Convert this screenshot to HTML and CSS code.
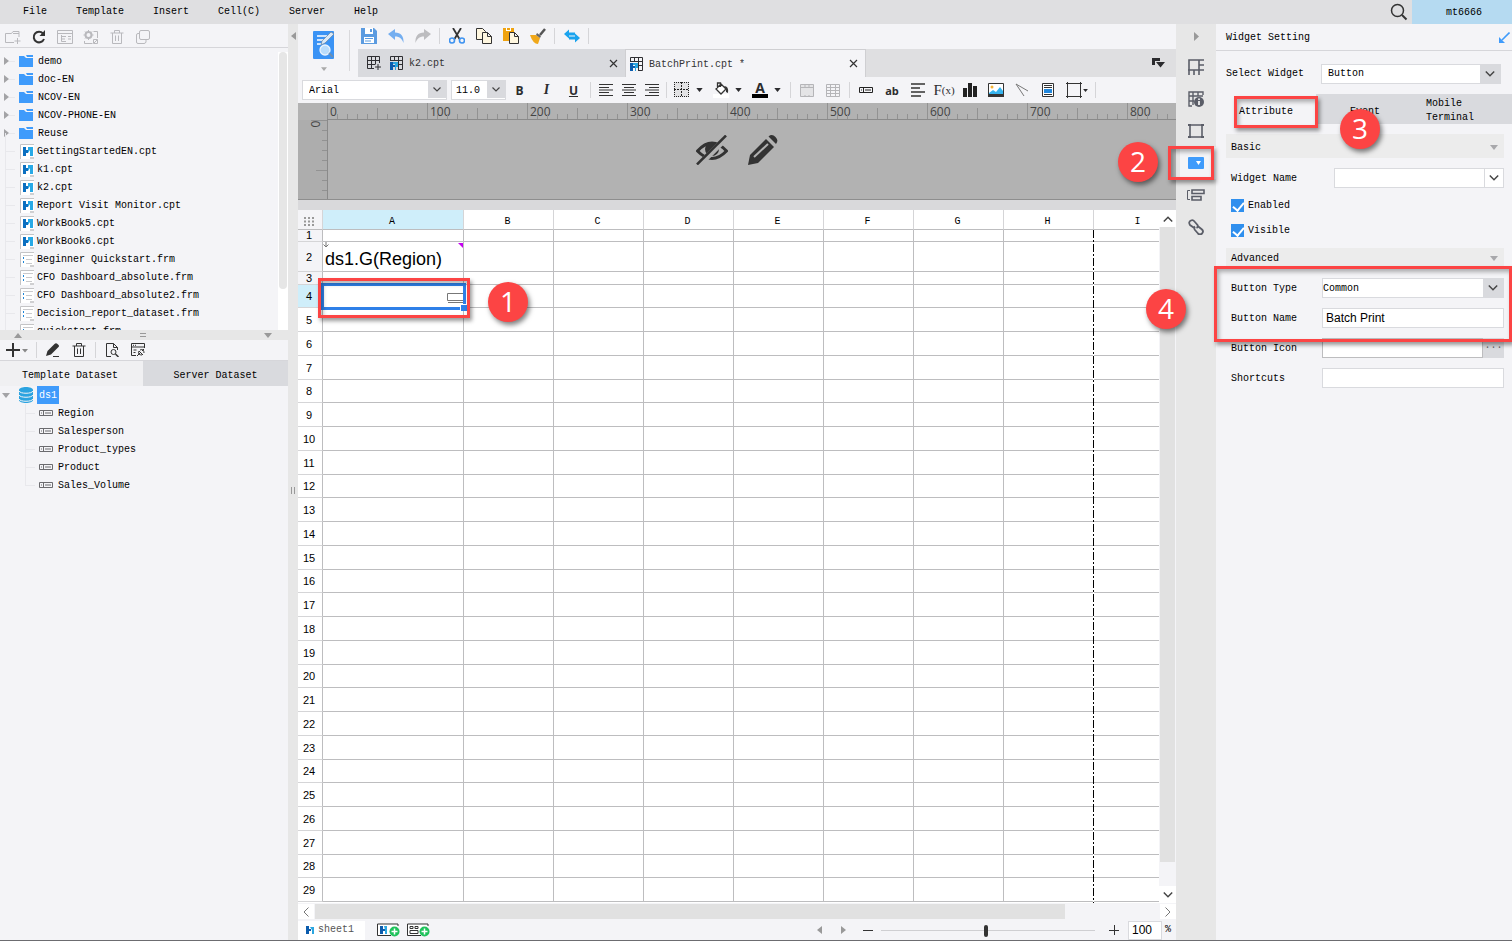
FILE: index.html
```
<!DOCTYPE html>
<html lang="en">
<head>
    <meta charset="UTF-8">
    <meta name="viewport" content="width=device-width, initial-scale=1.0">
    <title>Report Designer</title>
    <link rel="stylesheet" href="styles.css">
</head>
<body>
    <!-- Shared icons -->
    <svg class="sprite" aria-hidden="true">
        <symbol id="folder" viewBox="0 0 14 12"><path fill="#3f9bfb" d="M0 1h5l2 2h7v9H0z"/><path fill="#3f9bfb" d="M7 0h7v2H8z"/></symbol>
        <symbol id="cpt" viewBox="0 0 14 15"><path fill="#fff" d="M0 0h14v15H0z"/><path fill="none" stroke="#c4c4c6" d="M14 .5H.5V15"/><path fill="#cfcfd1" d="M10 13h4v2h-4z"/><path fill="#0b6fc0" d="M3 3h3v3h2v3H6v3H3z"/><path fill="#27a9e6" d="M8 3h5v9h-3V6L8 9z"/></symbol>
        <symbol id="frm" viewBox="0 0 14 15"><path fill="#fff" d="M0 0h14v15H0z"/><path fill="none" stroke="#c4c4c6" d="M14 .5H.5V15"/><path fill="#cfcfd1" d="M10 13h4v2h-4z"/><path fill="#1f86d8" d="M3 5h1v2H3zM3 9h1v2H3z"/><path fill="none" stroke="#c9c9cc" d="M3 3.500h10M6 7.500h6M6 11.500h6"/></symbol>
        <symbol id="field" viewBox="0 0 14 6"><path fill="none" stroke="#6b6b6f" d="M.5.5h13v5H.5zM4.500 1v4M6 3h6M2 3h1"/></symbol>
        <symbol id="down" viewBox="0 0 8 5"><path fill="none" stroke="#444" stroke-width="1.200" d="M.5.5L4 4 7.500.5"/></symbol>
        <symbol id="tri" viewBox="0 0 8 5"><path fill="currentColor" d="M0 0h8L4 5z"/></symbol>
        <symbol id="close" viewBox="0 0 9 9"><path fill="none" stroke="#333" stroke-width="1.200" d="M1 1l7 7M8 1L1 8"/></symbol>
        <symbol id="book" viewBox="0 0 14 14"><path fill="none" stroke="#2f2f33" d="M.5 5V.5h12v13H8M.5 4.500h12M4.500.5v4M8.500.5v13M8.500 8.500h4"/><path fill="#0b5cad" d="M0 6h3v3h2v2H3v3H0z"/><path fill="#2ba6e0" d="M3 6h5v5H6v3H5V8H3z"/></symbol>
        <symbol id="logo" viewBox="0 0 8 8"><path fill="#0b5cad" d="M0 0h3v3h2v2H3v3H0z"/><path fill="#2ba6e0" d="M4 1h4v7H6V4z"/></symbol>
    </svg>

    <header class="menubar">
        <nav class="menu">
            <button>File</button>
            <button>Template</button>
            <button>Insert</button>
            <button>Cell(C)</button>
            <button>Server</button>
            <button>Help</button>
        </nav>
        <button class="search" aria-label="Search">
            <svg width="18" height="18" viewBox="0 0 18 18"><circle cx="7.500" cy="7.500" r="6" fill="none" stroke="#333" stroke-width="1.500"/><path d="M12 12l4.500 4.500" stroke="#333" stroke-width="2"/></svg>
        </button>
        <button class="user">mt6666</button>
    </header>

    <main class="workspace">
        <!-- Left: files and datasets -->
        <aside class="left">
            <div class="tools file-tools">
                <button aria-label="New folder"><svg width="16" height="14" viewBox="0 0 16 14"><path fill="none" stroke="#b9b9bd" d="M9 12.500H.5V3.500h6L8 1.500h6V7M8 3.500h6M12.500 8v6M9.500 11h6"/></svg></button>
                <button aria-label="Refresh"><svg width="14" height="14" viewBox="0 0 14 14"><path fill="none" stroke="#333" stroke-width="2" d="M11 3.500A5.300 5.300 0 1 0 12 9"/><path fill="#333" d="M13 0v6H7.500z"/></svg></button>
                <button aria-label="Locate"><svg width="16" height="14" viewBox="0 0 16 14"><path fill="none" stroke="#b9b9bd" d="M.5.500h15v13H.5zM0 3.500h16M4.500 5v6.500H9M4 6.500h5M4 9h4M11 6.500h3M11 9h3"/></svg></button>
                <button aria-label="Settings"><svg width="16" height="14" viewBox="0 0 16 14"><circle cx="5.500" cy="5" r="3" fill="none" stroke="#b9b9bd" stroke-width="2"/><path stroke="#b9b9bd" fill="none" d="M5.500 0v2M5.500 8v2M.5 5h2M8.500 5h2M2 1.500l1 1M9 1.500l-1 1M2 8.500l1-1M10.500 1.500h4V8M1.500 11v2.500h8M10.500 9.500h4v4h-4zM11 13l3-3"/></svg></button>
                <button aria-label="Delete"><svg width="14" height="14" viewBox="0 0 14 14"><path fill="none" stroke="#b9b9bd" d="M.5 3h13M4.500 3V.5h5V3M2.500 3v10.500h9V3M5.500 5.500v5.500M8.500 5.500v5.500"/></svg></button>
                <button aria-label="Copy"><svg width="14" height="14" viewBox="0 0 14 14"><path fill="none" stroke="#b9b9bd" d="M5 .5h7q1.500 0 1.500 1.500v6q0 1.500-1.500 1.500H5Q3.500 9.500 3.500 8V2Q3.500.5 5 .5zM3 3.500H2Q.5 3.500.5 5v7q0 1.500 1.500 1.500h6q1.500 0 2-1.500v-2"/></svg></button>
            </div>
            <div class="files">
                <ul class="tree">
                    <li class="dir"><svg><use href="#folder"/></svg>demo</li>
                    <li class="dir"><svg><use href="#folder"/></svg>doc-EN</li>
                    <li class="dir"><svg><use href="#folder"/></svg>NCOV-EN</li>
                    <li class="dir"><svg><use href="#folder"/></svg>NCOV-PHONE-EN</li>
                    <li class="dir"><svg><use href="#folder"/></svg>Reuse</li>
                    <li><svg><use href="#cpt"/></svg>GettingStartedEN.cpt</li>
                    <li><svg><use href="#cpt"/></svg>k1.cpt</li>
                    <li><svg><use href="#cpt"/></svg>k2.cpt</li>
                    <li><svg><use href="#cpt"/></svg>Report Visit Monitor.cpt</li>
                    <li><svg><use href="#cpt"/></svg>WorkBook5.cpt</li>
                    <li><svg><use href="#cpt"/></svg>WorkBook6.cpt</li>
                    <li><svg><use href="#frm"/></svg>Beginner Quickstart.frm</li>
                    <li><svg><use href="#frm"/></svg>CFO Dashboard_absolute.frm</li>
                    <li><svg><use href="#frm"/></svg>CFO Dashboard_absolute2.frm</li>
                    <li><svg><use href="#frm"/></svg>Decision_report_dataset.frm</li>
                    <li><svg><use href="#frm"/></svg>quickstart.frm</li>
                </ul>
                <div class="file-scroll"><div class="file-thumb"></div></div>
            </div>
            <div class="hsplit">
                <svg class="flip" width="10" height="5"><use href="#tri"/></svg>
                <svg width="6" height="4"><path stroke="#999" d="M0 .5h6M0 3.500h6"/></svg>
                <svg width="10" height="5"><use href="#tri"/></svg>
            </div>
            <div class="tools data-tools">
                <button aria-label="Add dataset"><svg width="22" height="14" viewBox="0 0 22 14"><path stroke="#333" stroke-width="2" d="M0 7h14M7 0v14"/><path fill="#888" d="M16 6h6l-3 3.500z"/></svg></button>
                <i class="sep"></i>
                <button aria-label="Edit"><svg width="14" height="14" viewBox="0 0 14 14"><path fill="#333" d="M0 13l1.500-5 7-7q1.500-1.500 3 0l1 1q1 1 0 2l-7.500 7.500z"/><path stroke="#333" d="M7 13.500h6"/></svg></button>
                <button aria-label="Delete dataset"><svg width="14" height="14" viewBox="0 0 14 14"><path fill="none" stroke="#333" d="M.5 3h13M4.500 3V.5h5V3M2.500 3v10.500h9V3M5.500 5.500v5.500M8.500 5.500v5.500"/></svg></button>
                <i class="sep"></i>
                <button aria-label="Preview"><svg width="13" height="14" viewBox="0 0 13 14"><path fill="none" stroke="#333" d="M5 13.500H.5V.5h7l4 4V7M7.500.5v4h4"/><circle cx="7.500" cy="9" r="2.500" fill="none" stroke="#333"/><path stroke="#333" stroke-width="1.500" d="M9.500 11l3 3"/></svg></button>
                <button aria-label="Connection"><svg width="14" height="14" viewBox="0 0 14 14"><path fill="none" stroke="#333" d="M13.500 5V.5H.5v12H5M.5 4h13M2 2.300h1M4 2.300h1M2.500 7h3M2.500 9.500h2"/><path fill="none" stroke="#333" d="M6 13l3-3M8 8l4 4M9 7q2-1 3 0t1 3M8 8q-1 2 0 3t3 1M11 8l2-2"/></svg></button>
            </div>
            <div class="tabs2">
                <button class="on">Template Dataset</button>
                <button>Server Dataset</button>
            </div>
            <ul class="tree dataset">
                <li class="root"><svg viewBox="0 0 14 16"><path fill="#2ba3e0" d="M0 3v10c0 4 14 4 14 0V3c0-4-14-4-14 0z"/><path fill="none" stroke="#f4f4f7" d="M0 4c1 3 13 3 14 0M0 8c1 3 13 3 14 0M0 12c1 3 13 3 14 0"/></svg><span>ds1</span></li>
                <li><svg><use href="#field"/></svg>Region</li>
                <li><svg><use href="#field"/></svg>Salesperson</li>
                <li><svg><use href="#field"/></svg>Product_types</li>
                <li><svg><use href="#field"/></svg>Product</li>
                <li><svg><use href="#field"/></svg>Sales_Volume</li>
            </ul>
        </aside>

        <div class="vsplit">
            <svg width="5" height="8"><path fill="#999" d="M5 0v8L0 4z"/></svg>
            <svg class="grip" width="4" height="7"><path stroke="#999" d="M.5 0v7M3.500 0v7"/></svg>
        </div>

        <!-- Center: report editor -->
        <section class="editor">
            <div class="head">
                <button class="preview" aria-label="Preview report">
                    <svg width="22" height="29" viewBox="0 0 22 29"><rect width="21" height="28" rx="1" fill="#3a93f5"/><path stroke="#fff" stroke-width="1.500" d="M4 5h10M4 9h7M4 13h4"/><path fill="#dbe9f7" stroke="#6a7b8c" stroke-width=".6" d="M8 14l1-4 9-9 3 2-9 9z"/><circle cx="12" cy="19" r="5" fill="#b9dcfb" stroke="#e9f3fd" stroke-width="1.300"/><path stroke="#6a8fb4" stroke-width="2" d="M16 22l4 4"/></svg>
                    <svg width="6" height="4"><use href="#tri"/></svg>
                </button>
                <div class="head-main">
                    <div class="quick">
                        <button aria-label="Save"><svg width="16" height="16" viewBox="0 0 16 16"><path fill="#5b9be0" d="M0 0h13l3 3v13H0z"/><path fill="#fff" d="M4 0h8v6H4zM3 9h10v6H3z"/><path fill="#5b9be0" d="M9 1h2v3H9zM4 10h8v1H4zM4 12.500h6v1H4z"/></svg></button>
                        <button aria-label="Undo"><svg width="16" height="16" viewBox="0 0 16 16"><path fill="#74aef0" d="M0 6l7-5v3.500c6 0 9 4 8.500 10.500C14 11 12 8.500 7 8.500V12z"/></svg></button>
                        <button aria-label="Redo"><svg width="16" height="16" viewBox="0 0 16 16"><path fill="#bcbcbf" d="M16 6L9 1v3.500C3 4.500 0 8.500.5 15 2 11 4 8.500 9 8.500V12z"/></svg></button>
                        <i class="sep"></i>
                        <button aria-label="Cut"><svg width="16" height="16" viewBox="0 0 16 16"><path stroke="#333" stroke-width="1.800" d="M4 0l6.500 11M12 0L5.500 11"/><circle cx="3" cy="12.500" r="2.500" fill="none" stroke="#3f93f0" stroke-width="1.600"/><circle cx="13" cy="12.500" r="2.500" fill="none" stroke="#3f93f0" stroke-width="1.600"/></svg></button>
                        <button aria-label="Copy"><svg width="16" height="16" viewBox="0 0 16 16"><path fill="#fff7e0" stroke="#333" d="M.5.5h6l3 3v8h-9z"/><path fill="#fff7e0" stroke="#333" d="M6.500 4.500h5l4 4v7h-9zM11.500 4.500v4h4"/></svg></button>
                        <button aria-label="Paste"><svg width="16" height="16" viewBox="0 0 16 16"><path fill="#f0a30f" d="M0 0h11v13H0z"/><path fill="#fff" d="M3 0h5v3H3z"/><path fill="#f0a30f" d="M4 0h3v2H4z"/><path fill="#fff7e0" stroke="#333" d="M6.500 4.500h5l4 4v7h-9zM11.500 4.500v4h4"/></svg></button>
                        <button aria-label="Format painter"><svg width="16" height="16" viewBox="0 0 16 16"><path stroke="#555" stroke-width="2.500" d="M15 1l-5 6"/><path fill="#f0a81a" d="M0 7h6l4 3-2 6q-5 0-8-9z"/><path fill="#666" d="M7 5l4 3-1 2-4-3z"/></svg></button>
                        <i class="sep"></i>
                        <button aria-label="Swap"><svg width="16" height="14" viewBox="0 0 16 14"><path fill="#1aa3ee" d="M0 5l5-4.500V3.500h6v3H5v3zM16 9l-5 4.500v-3H5v-3h6V4.500z"/></svg></button>
                        <i class="sep"></i>
                    </div>
                    <div class="filetabs">
                        <button class="add" aria-label="New template"><svg width="14" height="14" viewBox="0 0 14 14"><path fill="none" stroke="#2f2f33" d="M7 12.500H.5V.5h12V7M.5 4.500h12M.5 8.500H8M4.500.5v12M8.500.5v8M11 8v6M8 11h6"/></svg></button>
                        <div class="filetab"><svg width="14" height="14"><use href="#book"/></svg><span>k2.cpt</span><button aria-label="Close k2.cpt"><svg width="9" height="9"><use href="#close"/></svg></button></div>
                        <div class="filetab active"><svg width="14" height="14"><use href="#book"/></svg><span>BatchPrint.cpt *</span><button aria-label="Close BatchPrint.cpt"><svg width="9" height="9"><use href="#close"/></svg></button></div>
                        <button class="more" aria-label="Open files"><svg width="13" height="10" viewBox="0 0 13 10"><path fill="#2b2b2e" d="M0 0h8v3H3v4H0zM4 4h9L8.500 9.500z"/></svg></button>
                    </div>
                </div>
            </div>

            <div class="format">
                <div class="combo font-family"><select aria-label="Font"><option>Arial</option></select><svg width="8" height="5"><use href="#down"/></svg></div>
                <div class="combo font-size"><select aria-label="Font size"><option>11.0</option></select><svg width="8" height="5"><use href="#down"/></svg></div>
                <button class="b">B</button>
                <button class="b it">I</button>
                <button class="b un">U</button>
                <i class="sep"></i>
                <button class="al" aria-label="Align left"><svg width="14" height="12" viewBox="0 0 14 12"><path stroke="#333" d="M0 .5h14M0 3.500h10M0 6h14M0 8.500h10M0 11.500h14"/></svg></button>
                <button class="al" aria-label="Align center"><svg width="14" height="12" viewBox="0 0 14 12"><path stroke="#333" d="M0 .5h14M2 3.500h10M0 6h14M2 8.500h10M0 11.500h14"/></svg></button>
                <button class="al" aria-label="Align right"><svg width="14" height="12" viewBox="0 0 14 12"><path stroke="#333" d="M0 .5h14M4 3.500h10M0 6h14M4 8.500h10M0 11.500h14"/></svg></button>
                <i class="sep"></i>
                <button class="drop" aria-label="Borders"><svg width="16" height="16" viewBox="0 0 16 16"><path fill="#e2e2e4" d="M0 0h15v15H0z"/><path fill="none" stroke="#222" stroke-dasharray="1 1" d="M0 .5h15M.5 0v15M0 14.500h15M14.500 0v15"/><path fill="none" stroke="#222" stroke-dasharray="2 1" d="M0 7.500h15M7.500 0v15"/></svg><svg width="7" height="4"><use href="#tri"/></svg></button>
                <button class="drop" aria-label="Fill"><svg width="16" height="16" viewBox="0 0 16 16"><path fill="#fff" d="M0 12h16v4H0z"/><path fill="#fff" stroke="#333" stroke-width="1.300" d="M3 7l5-5 5 5-5 5zM4.500 6V1h3v4"/><path fill="#333" d="M11 4q5 0 4 7l-2-1V7z"/></svg><svg width="7" height="4"><use href="#tri"/></svg></button>
                <button class="drop" aria-label="Text color"><span class="color">A</span><svg width="7" height="4"><use href="#tri"/></svg></button>
                <i class="sep"></i>
                <button class="tb" aria-label="Merge cells"><svg width="14" height="13" viewBox="0 0 14 13"><path fill="#e4e4e6" stroke="#b5b5b8" d="M.5.5h13v12H.5zM0 3.500h14M5 0v3M9 0v3M5 11v2M9 11v2"/></svg></button>
                <button class="tb" aria-label="Split cells"><svg width="14" height="13" viewBox="0 0 14 13"><path fill="none" stroke="#b5b5b8" d="M.5.5h13v12H.5zM0 3.500h14M0 6.500h14M0 9.500h14M4.500 0v13M9.500 0v13"/></svg></button>
                <i class="sep"></i>
                <button class="tb" aria-label="Field"><svg width="14" height="6" viewBox="0 0 14 6"><path fill="none" stroke="#222" d="M.5.5h13v5H.5zM4.500 1v4M6 3h6M2 3h1"/></svg></button>
                <button class="tb ab">ab</button>
                <button class="tb" aria-label="Rich text"><svg width="14" height="14" viewBox="0 0 14 14"><path stroke="#333" stroke-width="1.500" d="M0 1h14M0 5h9M0 9h14M0 13h10"/></svg></button>
                <button class="tb fx">F<small>(x)</small></button>
                <button class="tb" aria-label="Chart"><svg width="14" height="14" viewBox="0 0 14 14"><path fill="#222" d="M0 5h4v9H0zM5 0h4v14H5zM10 3h4v11h-4z"/></svg></button>
                <button class="tb" aria-label="Image"><svg width="16" height="14" viewBox="0 0 16 14"><path fill="#fff" stroke="#333" d="M.5.5h15v13H.5z"/><circle cx="4" cy="4" r="1.500" fill="#f5b335"/><path fill="#35b3ee" d="M1 10l4-3 3 2 4-5 3 4v3H1z"/><path fill="#333" d="M0 11h16v3H0z"/></svg></button>
                <button class="tb" aria-label="Slope line"><svg width="14" height="14" viewBox="0 0 14 14"><path fill="none" stroke="#777" d="M1 1l12 7M1 1l8 12"/></svg></button>
                <button class="tb" aria-label="Subreport"><svg width="12" height="14" viewBox="0 0 12 14"><path fill="#fff" stroke="#333" d="M.5.5h11v13H.5zM2 2.500h8M2 4.500h8M2 11.500h8"/><path fill="#2388dd" d="M2 6h8v4H2z"/></svg></button>
                <button class="box" aria-label="Shape"><svg width="16" height="16" viewBox="0 0 16 16"><path fill="none" stroke="#333" d="M0 1.500h16M0 14.500h16M1.500 0v16M14.500 0v16"/></svg><svg width="5" height="3"><use href="#tri"/></svg></button>
                <i class="sep"></i>
            </div>

            <div class="param">
                <div class="ruler-x" id="rulerX"></div>
                <div class="ruler-y" id="rulerY"><span>0</span></div>
                <div class="param-body">
                    <button aria-label="Hide pane"><svg width="32" height="30" viewBox="0 0 32 30"><path fill="none" stroke="#333" stroke-width="3" d="M1.500 16Q16 0 30.500 16 16 31 1.500 16z"/><circle cx="16" cy="14" r="7" fill="#333"/><path stroke="#b2b2b2" stroke-width="6" d="M2 31L31 2"/><path stroke="#333" stroke-width="2.500" d="M1 29.500L30 .5"/></svg></button>
                    <button aria-label="Edit pane"><svg width="30" height="30" viewBox="0 0 30 30"><path fill="#333" d="M0 30l2-10L18 4l8 8-16 16z"/><path fill="#333" d="M20.500 1.500q3.500-3 7 .5t.5 7z"/><path stroke="#b2b2b2" stroke-width="2" d="M6 22L20 9"/><path stroke="#b2b2b2" d="M19.500 2.500l8 8"/></svg></button>
                </div>
            </div>

            <div class="sheet">
                <div class="cells">
                    <table>
                        <colgroup id="cols"></colgroup>
                        <thead><tr id="letters"></tr></thead>
                        <tbody id="rows"></tbody>
                    </table>
                    <div class="page-break"></div>
                </div>
                <div class="vscroll">
                    <button aria-label="Scroll up"><svg class="flip" width="10" height="6"><use href="#down"/></svg></button>
                    <div class="vthumb"></div>
                    <button aria-label="Scroll down"><svg width="10" height="6"><use href="#down"/></svg></button>
                </div>
            </div>
            <div class="hscroll">
                <button aria-label="Scroll left"><svg width="6" height="10"><path fill="none" stroke="#777" d="M5.500.5L1 5l4.500 4.500"/></svg></button>
                <div class="hthumb"></div>
                <button aria-label="Scroll right"><svg width="6" height="10"><path fill="none" stroke="#777" d="M.5.5L5 5 .5 9.500"/></svg></button>
            </div>
            <footer class="status">
                <button class="sheet-tab"><svg width="8" height="8"><use href="#logo"/></svg>sheet1</button>
                <button class="add-sheet" aria-label="Add sheet"><svg width="23" height="14" viewBox="0 0 23 14"><path fill="#fff" stroke="#333" d="M21 3V1H.5v11.500H14"/><path fill="#0b5cad" d="M3 3h3v3h2v2H6v3H3z"/><path fill="#2ba6e0" d="M7 3h3v8H8V7z"/><circle cx="17.500" cy="8.500" r="5" fill="#1fc25b"/><path stroke="#fff" stroke-width="1.500" d="M14.500 8.500h6M17.500 5.500v6"/></svg></button>
                <button class="add-sheet" aria-label="Add form sheet"><svg width="23" height="14" viewBox="0 0 23 14"><path fill="#fff" stroke="#333" d="M21 3V1H.5v11.500H14"/><path fill="none" stroke="#333" d="M3 3.500h3v2H3zM8 3.500h3v2H8zM3 7.500h8v3H3z"/><circle cx="17.500" cy="8.500" r="5" fill="#1fc25b"/><path stroke="#fff" stroke-width="1.500" d="M14.500 8.500h6M17.500 5.500v6"/></svg></button>
                <div class="zoom">
                    <button aria-label="Previous sheet"><svg width="5" height="8"><path fill="#999" d="M5 0v8L0 4z"/></svg></button>
                    <button aria-label="Next sheet"><svg width="5" height="8"><path fill="#999" d="M0 0v8l5-4z"/></svg></button>
                    <button aria-label="Zoom out"><svg width="10" height="10"><path stroke="#333" d="M0 5.500h10"/></svg></button>
                    <input type="range" min="0" max="100" value="49" aria-label="Zoom">
                    <button aria-label="Zoom in"><svg width="10" height="10"><path stroke="#333" d="M0 5.500h10M5.500 0v10"/></svg></button>
                    <input type="text" id="zoomValue" value="100">
                    <label for="zoomValue">%</label>
                </div>
            </footer>
        </section>

        <nav class="rail">
            <button class="rail-toggle" aria-label="Collapse"><svg width="5" height="9"><path fill="#999" d="M0 0v9l5-4.500z"/></svg></button>
            <button aria-label="Cell element"><svg width="16" height="16" viewBox="0 0 16 16"><path fill="none" stroke="#5b5e68" stroke-width="1.600" d="M1 16V1h10v10M0 11h16M11 1h5M11 6h5M6 11v5M11 11v5"/></svg></button>
            <button aria-label="Cell attribute"><svg width="16" height="16" viewBox="0 0 16 16"><path fill="none" stroke="#5b5e68" stroke-width="1.400" d="M4 15H1V1h14v3M1 5h14M1 10h5M5 1v13M10 1v4"/><circle cx="11" cy="11" r="5" fill="#5b5e68"/><path stroke="#fff" stroke-width="1.600" d="M11 10v4M11 7.500v1.500"/></svg></button>
            <button aria-label="Floating element"><svg width="16" height="16" viewBox="0 0 16 16"><path fill="none" stroke="#5b5e68" stroke-width="1.600" d="M2 2h12v12H2z"/><path fill="#5b5e68" d="M0 1h3v2H0zM13 1h3v2h-3zM0 13h3v2H0zM13 13h3v2h-3z"/></svg></button>
            <button class="on" aria-label="Widget setting"><svg width="16" height="12" viewBox="0 0 16 12"><rect width="16" height="12" rx="1" fill="#3f9bfb"/><path fill="#fff" d="M8 4h5l-2.500 4z"/></svg></button>
            <button aria-label="Condition attribute"><svg width="18" height="12" viewBox="0 0 18 12"><path fill="none" stroke="#5b5e68" stroke-width="1.600" d="M5 1h12v3.500H5zM5 7.500h9V11H5z"/><path fill="none" stroke="#5b5e68" d="M3 1.500H.5v9H3"/></svg></button>
            <button aria-label="Hyperlink"><svg width="16" height="16" viewBox="0 0 16 16"><path fill="none" stroke="#5b5e68" stroke-width="1.800" d="M7 9.500L2 6Q0 3 3 1.500q2-1 3.500 1l3 3.500q1 2-1 3M9 6.500l5 4q2 2 0 4t-4 0L7 11q-1.500-2 0-3.500"/></svg></button>
        </nav>

        <!-- Right: widget settings -->
        <aside class="settings">
            <h2>Widget Setting <svg width="12" height="12" viewBox="0 0 12 12"><path fill="none" stroke="#3f9bfb" stroke-width="1.600" d="M11.500.5L4 8"/><path fill="#3f9bfb" d="M1 11V5l6 6z"/></svg></h2>
            <div class="select-widget">
                <label for="widget">Select Widget</label>
                <div class="combo"><select id="widget"><option>Button</option></select><svg width="10" height="6"><use href="#down"/></svg></div>
            </div>
            <div class="tabs3">
                <button class="on">Attribute</button>
                <button>Event</button>
                <button class="two">Mobile Terminal</button>
            </div>
            <div class="group">
                <h3>Basic <svg width="8" height="5"><use href="#tri"/></svg></h3>
                <div class="field wide">
                    <label for="wname">Widget Name</label>
                    <div class="combo light"><input type="text" id="wname"><svg width="10" height="6"><use href="#down"/></svg></div>
                </div>
                <label class="check"><input type="checkbox" checked>Enabled</label>
                <label class="check"><input type="checkbox" checked>Visible</label>
                <h3 class="advanced">Advanced <svg width="8" height="5"><use href="#tri"/></svg></h3>
                <div class="field">
                    <label for="btype">Button Type</label>
                    <div class="combo flush"><select id="btype"><option>Common</option></select><svg width="10" height="6"><use href="#down"/></svg></div>
                </div>
                <div class="field">
                    <label for="bname">Button Name</label>
                    <input type="text" id="bname" value="Batch Print">
                </div>
                <div class="field">
                    <label for="bicon">Button Icon</label>
                    <div class="picker"><input type="text" id="bicon"><button aria-label="Choose icon">···</button></div>
                </div>
                <div class="field">
                    <label for="short">Shortcuts</label>
                    <input type="text" id="short">
                </div>
            </div>
        </aside>
    </main>

    <!-- Step markers over the window -->
    <div class="mark mark-1"></div>
    <div class="mark mark-2"></div>
    <div class="mark mark-3"></div>
    <div class="mark mark-4"></div>
    <div class="step step-1">1</div>
    <div class="step step-2">2</div>
    <div class="step step-3">3</div>
    <div class="step step-4">4</div>

    <script>
        const letters = "ABCDEFGHI".split("");
        const rowCount = 29;

        // Sheet header and rows
        document.getElementById("cols").innerHTML =
            '<col class="c-num"><col class="c-a">' + '<col class="c">'.repeat(letters.length - 1);
        document.getElementById("letters").innerHTML =
            '<th class="corner"><svg width="10" height="9"><path stroke="#999" stroke-width="2" stroke-dasharray="2 2" d="M0 1h10M0 4.500h10M0 8h10"/></svg></th>' +
            letters.map((l, i) => `<th class="${i === 0 ? "sel" : ""}">${l}</th>`).join("");

        let html = "";
        for (let r = 1; r <= rowCount; r++) {
            html += `<tr class="r${r}"><th class="${r === 4 ? "sel" : ""}">${r}</th>`;
            for (const l of letters) {
                if (l === "A" && r === 2) {
                    html += '<td class="formula"><svg class="expand" width="6" height="6"><path fill="none" stroke="#777" d="M3 0v5M.5 2.500L3 5l2.500-2.500"/></svg>ds1.G(Region)</td>';
                } else if (l === "A" && r === 4) {
                    html += '<td class="selected"><svg width="16" height="10"><path fill="none" stroke="#777" d="M16 .5H.5v7H16M1 9.500h15"/></svg></td>';
                } else {
                    html += "<td></td>";
                }
            }
            html += "</tr>";
        }
        document.getElementById("rows").innerHTML = html;

        // Rulers: one tick every 10 units, a label every 100
        function ruler(count, vertical) {
            let out = "";
            for (let i = 0; i < count; i++) {
                const len = i % 10 === 0 ? 16 : i % 5 === 0 ? 11 : 5;
                const p = i * 10;
                out += vertical
                    ? `<path d="M${16 - len} ${p}.5h${len}"/>`
                    : `<path d="M${p}.5 ${16 - len}v${len}"/>`;
                if (!vertical && i % 10 === 0) {
                    out += `<text x="${p + 3}" y="13">${p}</text>`;
                }
            }
            return `<svg>${out}</svg>`;
        }
        document.getElementById("rulerX").innerHTML = ruler(200, false);
        document.getElementById("rulerY").innerHTML += ruler(8, true);
    </script>
</body>
</html>
```
FILE: styles.css
```
* {
    margin: 0;
    padding: 0;
    box-sizing: border-box;
}
body {
    position: relative;
    display: flex;
    flex-direction: column;
    height: 100vh;
    overflow: hidden;
    background: #f4f4f7;
    border-bottom: 1px solid #6c6c70;
    color: #000;
    font-family: "Liberation Mono", monospace;
    font-size: 10px;
    line-height: 14px;
}
button, input, select {
    font: inherit;
    color: inherit;
    border: none;
    background: none;
    outline: none;
}
button {
    display: flex;
    align-items: center;
    justify-content: center;
}
svg {
    display: block;
    flex: none;
}
ul {
    list-style: none;
}
.sprite {
    position: absolute;
    width: 0;
    height: 0;
}
.flip {
    transform: rotate(180deg);
}
.sep {
    width: 1px;
    height: 16px;
    margin: 0 3px;
    background: #d5d5d8;
}

/* menu bar */
.menubar {
    display: flex;
    flex: none;
    height: 24px;
    background: #dfdfe1;
}
.menu {
    display: flex;
    flex: 1;
    gap: 29px;
    padding-left: 23px;
}
.search {
    width: 26px;
}
.user {
    width: 100px;
    padding: 2px 0 0 4px;
    background: #b5daf1;
}

.workspace {
    display: flex;
    flex: 1;
    min-height: 0;
}

/* left panel */
.left {
    display: flex;
    flex-direction: column;
    width: 288px;
}
.tools {
    display: flex;
    align-items: center;
    border-bottom: 1px solid #d6d6da;
}
.file-tools {
    height: 24px;
    gap: 10px;
    padding: 2px 0 0 5px;
}
.file-tools button {
    width: 16px;
}
.files {
    display: flex;
    height: 282px;
    padding-top: 4px;
    overflow: hidden;
}
.tree {
    flex: 1;
    position: relative;
}
.tree li {
    position: relative;
    display: flex;
    align-items: center;
    height: 18px;
    padding: 2px 0 0 20px;
    gap: 3px;
    white-space: pre;
}
.tree li::before {
    content: "";
    width: 9px;
    height: 18px;
    position: absolute;
    left: 5px;
    top: -9px;
    border: solid #e8e8ec;
    border-width: 0 0 1px 1px;
}
.tree svg {
    width: 14px;
    height: 15px;
    margin-top: -2px;
}
.tree .dir {
    padding-left: 19px;
    gap: 5px;
}
.tree .dir svg {
    height: 12px;
}
.tree .dir::before {
    left: 9px;
    width: 6px;
    border-left: none;
}
.tree .dir::after,
.tree .root::after {
    content: "";
    position: absolute;
    left: 4px;
    top: 5px;
    border-left: 5px solid #a3a3a6;
    border-top: 4px solid transparent;
    border-bottom: 4px solid transparent;
}
.file-scroll {
    width: 10px;
    background: #fff;
}
.file-thumb {
    width: 8px;
    height: 237px;
    margin-left: 1px;
    border-radius: 4px;
    background: #e6e6e6;
}
.hsplit {
    display: flex;
    align-items: center;
    justify-content: space-between;
    height: 10px;
    padding: 0 15px 0 13px;
    background: #e7e7e7;
    color: #999;
}
.data-tools {
    height: 21px;
    padding-left: 6px;
}
.data-tools button {
    width: 26px;
}
.data-tools button:first-child {
    width: 22px;
    margin-right: 5px;
}
.tabs2 {
    display: flex;
    height: 25px;
}
.tabs2 button {
    flex: 1;
    padding-top: 4px;
    background: #d9dade;
}
.tabs2 .on {
    flex: 0 0 143px;
    padding-right: 3px;
    background: #f0f0f2;
}
.dataset li {
    padding-left: 39px;
    gap: 5px;
}
.dataset li::before {
    left: 25px;
}
.dataset .root + li::before {
    top: 0;
    height: 9px;
}
.dataset svg {
    height: 6px;
}
.dataset .root {
    padding: 0 0 0 19px;
    gap: 4px;
}
.dataset .root::before {
    display: none;
}
.dataset .root::after {
    left: 2px;
    top: 7px;
    border-top: 5px solid #a3a3a6;
    border-left: 4px solid transparent;
    border-right: 4px solid transparent;
    border-bottom: none;
}
.dataset .root svg {
    height: 16px;
    margin: 0;
}
.dataset span {
    padding: 3px 2px 1px;
    background: #3f9bfb;
    color: #fff;
}

.vsplit {
    display: flex;
    flex-direction: column;
    align-items: center;
    width: 10px;
    padding-top: 8px;
    background: #e7e7e7;
}
.vsplit .grip {
    margin: auto 0;
}

/* editor */
.editor {
    display: flex;
    flex: 1;
    flex-direction: column;
    min-width: 0;
}
.head {
    display: flex;
    height: 53px;
}
.preview {
    flex-direction: column;
    width: 52px;
    height: 41px;
    margin: 6px 6px 0 0;
    gap: 7px;
    border-right: 1px solid #d9d9dc;
    color: #aaa;
}
.head-main {
    flex: 1;
    min-width: 0;
}
.quick {
    display: flex;
    align-items: center;
    height: 25px;
    margin-left: -1px;
    padding-bottom: 1px;
}
.quick button {
    width: 27px;
}
.filetabs {
    display: flex;
    height: 28px;
    margin-left: 2px;
    background: #dfdfe1;
    color: #333;
}
.filetabs .add {
    width: 26px;
    padding-left: 5px;
    background: #d9dade;
}
.filetab {
    display: flex;
    align-items: center;
    width: 241px;
    padding: 0 7px 0 6px;
    gap: 5px;
    background: #d9dade;
}
.filetab span {
    flex: 1;
    padding-top: 2px;
}
.filetab.active {
    padding-left: 4px;
    background: #f4f4f7;
    border: solid #cfcfd2;
    border-width: 1px 1px 0;
}
.filetabs .more {
    margin-left: auto;
    width: 36px;
}
.format {
    display: flex;
    align-items: center;
    height: 26px;
    padding-left: 4px;
    color: #2c2c2f;
}
.combo {
    position: relative;
    display: flex;
    height: 20px;
    border: 1px solid #d9dade;
    background: #fff;
    color: #000;
}
.combo select,
.combo input {
    width: 100%;
    padding: 1px 0 0 6px;
    appearance: none;
}
.combo svg {
    box-sizing: content-box;
    padding: 6px 5px;
    background: #d9dade;
    pointer-events: none;
}
.font-family {
    width: 145px;
    margin-right: 4px;
}
.font-size {
    width: 55px;
}
.font-size select {
    padding-left: 4px;
}
.format button {
    height: 24px;
}
.format .b {
    width: 27px;
    font: bold 12px "Open Sans", sans-serif;
}
.format .it {
    font-family: "Liberation Serif", serif;
    font-style: italic;
    font-size: 14px;
}
.format .un {
    text-decoration: underline;
}
.format .al {
    width: 23px;
}
.format .drop {
    width: 39px;
    gap: 6px;
    padding-right: 2px;
}
.color {
    width: 16px;
    height: 16px;
    border-bottom: 4px solid #000;
    font: bold 14px/12px "Open Sans", sans-serif;
}
.format .tb {
    width: 26px;
}
.format .ab {
    font: bold 11px "Open Sans", sans-serif;
}
.format .fx {
    font: 15px "Liberation Serif", serif;
}
.fx small {
    font-size: 11px;
}
.format .box {
    width: 31px;
    gap: 1px;
}

/* parameter pane */
.param {
    display: grid;
    grid-template-columns: 30px 1fr;
    grid-template-rows: 17px 1fr;
    height: 97px;
    background: #b2b2b2;
    border-bottom: 1px solid #8e8e8e;
}
.ruler-x {
    grid-column: 2;
    margin-left: -1px;
    overflow: hidden;
    border-bottom: 1px solid #8a8a8a;
}
.ruler-x svg {
    width: 2000px;
    height: 16px;
}
.ruler-x path,
.ruler-y path {
    stroke: #929292;
}
.ruler-x text {
    font: 12px "Open Sans", sans-serif;
    fill: #444;
}
.ruler-y {
    position: relative;
    overflow: hidden;
    background: #adadad;
    border-right: 1px solid #8a8a8a;
}
.ruler-y svg {
    width: 16px;
    height: 80px;
    margin-left: auto;
}
.ruler-y span {
    position: absolute;
    left: 15px;
    top: -3px;
    font: 12px/14px "Open Sans", sans-serif;
    color: #444;
    transform: rotate(-90deg);
}
.param-body {
    display: flex;
    gap: 20px;
    padding: 15px 0 0 368px;
    align-items: flex-start;
}

/* sheet */
.sheet {
    display: flex;
    flex: 1;
    min-height: 0;
    border-top: 10px solid #d9d9db;
}
.cells {
    position: relative;
    flex: 1;
    overflow: hidden;
    background: #fff;
}
table {
    width: 886px;
    table-layout: fixed;
    border-collapse: separate;
    border-spacing: 0;
}
.c-num {
    width: 25px;
}
.c-a {
    width: 141px;
}
.c {
    width: 90px;
}
th, td {
    height: 24px;
    border: solid #bdbdbf;
    border-width: 0 1px 1px 0;
    line-height: 11px;
    font-weight: normal;
    overflow: visible;
}
thead th {
    height: 20px;
    border-right-color: #d5d5d7;
    padding: 3px 2px 0 0;
}
tbody th {
    padding: 1px 2px 0 0;
    font: 11px/11px "Liberation Sans", sans-serif;
    border-bottom-color: #d5d5d7;
}
.corner {
    background: #f4f4f7;
}
.corner svg {
    margin: 0 auto;
}
tbody tr:nth-child(4n) > * {
    height: 23px;
}
.r1 > * {
    height: 12px;
}
.r1 th, .r3 th {
    padding-top: 0;
}
.r2 > * {
    height: 30px;
}
.r3 > * {
    height: 13px;
}
.r1 th, .r2 th, .r3 th {
    background: #f4f4f7;
}
th.sel {
    background: #cfeefa;
}
.formula {
    position: relative;
    padding: 4px 0 0 2px;
    font: 18px/18px "Liberation Sans", sans-serif;
}
.formula::after {
    content: "";
    position: absolute;
    right: 0;
    top: 1px;
    border-top: 5px solid #c400f0;
    border-left: 5px solid transparent;
}
.expand {
    position: absolute;
    left: 0;
    top: 0;
}
.selected {
    position: relative;
}
.selected svg {
    margin: 4px 0 0 auto;
}
.selected::before {
    content: "";
    position: absolute;
    inset: -2px -3px -3px -2px;
    border: 3px solid #2f80e8;
}
.selected::after {
    content: "";
    position: absolute;
    right: -4px;
    bottom: -4px;
    width: 6px;
    height: 6px;
    background: #2f80e8;
    border: solid #fff;
    border-width: 1px 0 0 1px;
}
.page-break {
    position: absolute;
    left: 795px;
    top: 20px;
    bottom: 0;
    width: 1px;
    background: repeating-linear-gradient(#000 0 8px, #fff 8px 10px, #000 10px 12px, #fff 12px 14px);
}
.vscroll {
    display: flex;
    flex-direction: column;
    width: 17px;
    background: #f4f4f7;
}
.vscroll button {
    height: 17px;
    background: #fff;
}
.vthumb {
    flex: 1;
    margin: 0 1px 24px;
    background: #e1e1e1;
}
.hscroll {
    display: flex;
    height: 17px;
    padding: 1px 0;
}
.hscroll button {
    width: 16px;
    background: #fff;
}
.hthumb {
    flex: 1;
    margin: 0 95px 0 1px;
    background: #e1e1e1;
}
.status {
    display: flex;
    align-items: center;
    height: 20px;
}
.sheet-tab {
    width: 67px;
    height: 19px;
    gap: 4px;
    background: #fff;
    color: #555;
    margin-right: 12px;
    padding-right: 3px;
}
.add-sheet {
    margin-right: 7px;
}
.zoom {
    display: flex;
    align-items: center;
    margin-left: auto;
}
.zoom button {
    width: 24px;
}
.zoom button:nth-child(3) {
    width: 26px;
}
.zoom input[type="range"] {
    width: 214px;
    height: 12px;
    appearance: none;
}
.zoom input[type="range"]::-webkit-slider-runnable-track {
    height: 1px;
    background: #cfcfd2;
}
.zoom input[type="range"]::-webkit-slider-thumb {
    appearance: none;
    width: 4px;
    height: 12px;
    margin-top: -5px;
    border-radius: 2px;
    background: #333;
}
.zoom input[type="range"] + button {
    width: 38px;
}
.zoom input[type="text"] {
    width: 34px;
    height: 19px;
    padding-left: 3px;
    margin-right: 3px;
    margin-left: -5px;
    border: 1px solid #d9dade;
    background: #fff;
    font: 12px "Liberation Sans", sans-serif;
}
.zoom label {
    width: 11px;
}

/* icon rail */
.rail {
    display: flex;
    flex-direction: column;
    width: 40px;
    background: #e7e7e7;
}
.rail button {
    height: 32px;
}
.rail .rail-toggle {
    height: 25px;
    margin-bottom: 2px;
}
.rail .on {
    margin-left: 4px;
    padding-right: 4px;
    background: #f4f4f7;
}

/* widget settings */
.settings {
    width: 296px;
}
h2, h3 {
    display: flex;
    align-items: center;
    justify-content: space-between;
    font-size: 10px;
    font-weight: normal;
}
h2 {
    height: 27px;
    padding: 2px 2px 0 10px;
    border-bottom: 1px solid #d6d6da;
}
.select-widget {
    display: flex;
    align-items: center;
    height: 43px;
    padding: 2px 11px 0 10px;
}
.select-widget label {
    width: 95px;
    padding-top: 1px;
}
.select-widget .combo {
    flex: 1;
}
.tabs3 {
    display: flex;
    height: 30px;
    margin-bottom: 10px;
    background: #d9dade;
}
.tabs3 button {
    width: 98px;
    padding-top: 6px;
}
.tabs3 .on {
    width: 100px;
    background: #f4f4f7;
}
.tabs3 .two {
    padding: 4px 28px 0 12px;
    text-align: left;
}
.group {
    padding: 0 8px 0 10px;
}
h3 {
    height: 24px;
    padding: 3px 6px 0 5px;
    background: #ececec;
}
h3 svg {
    color: #a8a8ab;
}
h3.advanced {
    height: 20px;
    margin: 5px 0;
    padding-top: 1px;
}
.field {
    display: flex;
    align-items: center;
    height: 30px;
    padding-left: 5px;
}
.field label {
    width: 91px;
    padding-top: 2px;
}
.field.wide {
    height: 40px;
}
.wide label {
    width: 103px;
}
.field > .combo,
.field > input,
.picker {
    flex: 1;
    min-width: 0;
}
.field > input,
.picker input {
    height: 20px;
    padding-left: 3px;
    border: 1px solid #d9dade;
    background: #fff;
    font: 12px "Liberation Sans", sans-serif;
}
.light svg {
    padding: 6px 4px;
    background: #fff;
    border-left: 1px solid #d9dade;
}
.flush select {
    padding-left: 0;
}
.picker {
    display: flex;
}
.picker input {
    flex: 1;
    min-width: 0;
    border-color: #bdbdbf;
}
.picker button {
    width: 21px;
    background: #d9dade;
    color: #666;
}
.check {
    display: flex;
    align-items: center;
    width: 100px;
    height: 25px;
    margin-left: 5px;
    gap: 4px;
}
.field + .check {
    margin-top: -5px;
}
.check input {
    position: relative;
    width: 13px;
    height: 13px;
    appearance: none;
}
.check input:checked {
    background: #2f8fee;
}
.check input:checked::after {
    content: "";
    position: absolute;
    left: 4px;
    top: 1px;
    width: 5px;
    height: 9px;
    border: solid #fff;
    border-width: 0 2px 2px 0;
    transform: rotate(40deg);
}

/* step markers */
.mark {
    position: absolute;
    border: 3px solid #fc4444;
    box-shadow: 2px 3px 4px rgba(0, 0, 0, 0.4), inset 2px 3px 4px rgba(0, 0, 0, 0.3);
    pointer-events: none;
}
.mark-1 {
    left: 318px;
    top: 278px;
    width: 152px;
    height: 40px;
}
.mark-2 {
    right: 298px;
    top: 146px;
    width: 46px;
    height: 34px;
}
.mark-3 {
    right: 194px;
    top: 96px;
    width: 84px;
    height: 32px;
}
.mark-4 {
    right: 0;
    top: 266px;
    width: 298px;
    height: 76px;
}
.step {
    position: absolute;
    width: 40px;
    height: 40px;
    border-radius: 50%;
    background: #fc4444;
    box-shadow: 2px 3px 5px rgba(0, 0, 0, 0.5);
    color: #fff;
    font: 28px/38px "Open Sans", sans-serif;
    text-align: center;
}
.step-1 {
    left: 488px;
    top: 282px;
}
.step-2 {
    right: 354px;
    top: 142px;
}
.step-3 {
    right: 132px;
    top: 109px;
}
.step-4 {
    right: 326px;
    top: 289px;
}
```
